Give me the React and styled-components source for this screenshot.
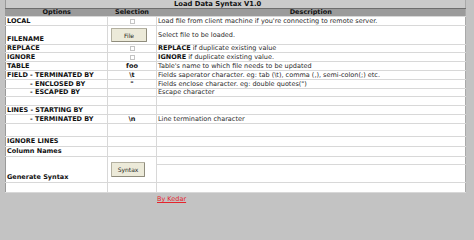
import React from 'react';
import styled, { createGlobalStyle } from 'styled-components';

const GlobalStyle = createGlobalStyle`
  html, body {
    margin: 0;
    padding: 0;
    background: #c3c3c3;
    overflow: hidden;
  }
  body {
    font-family: "DejaVu Sans", Verdana, sans-serif;
  }
`

const Page = styled.div`
  width: 474px;
  height: 204px;
`

const Sheet = styled.table`
  width: 460px;
  margin-left: 5px;
  border-collapse: collapse;
  table-layout: fixed;
  background: #fff;
  border-left: 1px solid #9a9a9a;
  border-right: 1px solid #a9a9a9;
`

const TitleCell = styled.th`
  height: 8px;
  padding: 0 0 0 168px;
  background: #cbcbcb;
  border-bottom: 1px solid #6e6e6e;
  font-size: 6.8px;
  line-height: 8px;
  font-weight: bold;
  color: #111;
  text-align: left;
`

const HeadCell = styled.th`
  height: 7px;
  padding: 0;
  background: #9b9b9b;
  font-size: 6.5px;
  line-height: 7px;
  font-weight: bold;
  color: #111;
  text-align: center;
`

const Row = styled.tr`
  height: ${({ $h }) => $h || 9}px;
`

const Label = styled.td`
  padding: 0 0 0 ${({ $indent }) => ($indent ? 24 : 1)}px;
  border: 1px solid #d8d8d8;
  border-left: none;
  font-size: 6.5px;
  line-height: 7px;
  font-weight: bold;
  color: #111;
  vertical-align: ${({ $bottom }) => ($bottom ? 'bottom' : 'middle')};
  padding-bottom: ${({ $bottom }) => ($bottom ? 1 : 0)}px;
  white-space: nowrap;
`

const Pick = styled.td`
  padding: 0;
  border: 1px solid #d8d8d8;
  font-size: 6.5px;
  line-height: 7px;
  font-weight: bold;
  color: #111;
  text-align: center;
  vertical-align: middle;
`

const Desc = styled.td`
  padding: 0 0 0 1px;
  border: 1px solid #d8d8d8;
  border-right: none;
  font-size: 6.5px;
  line-height: 7px;
  color: #2a2a2a;
  white-space: nowrap;
  vertical-align: middle;

  b {
    color: #111;
  }
`

const Check = styled.input.attrs({ type: 'checkbox' })`
  appearance: none;
  display: block;
  width: 5px;
  height: 5px;
  margin: 0 auto;
  border: 1px solid #c4c4c4;
  background: #fff;
`

const Button = styled.button`
  display: block;
  margin: 0 0 0 3px;
  width: ${({ $w }) => $w}px;
  height: ${({ $hh }) => $hh}px;
  padding: 0;
  background: #ecead9;
  border: 1px solid #b3b0a0;
  border-bottom-color: #8f8c7c;
  border-right-color: #8f8c7c;
  border-radius: 1px;
  font-family: "DejaVu Sans", Verdana, sans-serif;
  font-size: 6px;
  color: #222;
`

const Footer = styled.div`
  padding: 2px 0 0 157px;
  font-size: 6.5px;
  line-height: 8px;
`

const Credit = styled.a`
  color: #e5242c;
  text-decoration: underline;
`

const rows = [
  { label: 'LOCAL', pick: <Check />, desc: "Load file from client machine if you're connecting to remote server." },
  { label: 'FILENAME', h: 19, bottom: true, pick: <Button $w={36} $hh={14}>File</Button>, desc: 'Select file to be loaded.' },
  { label: 'REPLACE', h: 8, pick: <Check />, desc: <><b>REPLACE</b> if duplicate existing value</> },
  { label: 'IGNORE', pick: <Check />, desc: <><b>IGNORE</b> if duplicate existing value.</> },
  { label: 'TABLE', pick: 'foo', desc: "Table's name to which file needs to be updated" },
  { label: 'FIELD - TERMINATED BY', pick: '\\t', desc: 'Fields saperator character. eg: tab (\\t), comma (,), semi-colon(;) etc.' },
  { label: '- ENCLOSED BY', indent: true, pick: '"', desc: 'Fields enclose character. eg: double quotes(")' },
  { label: '- ESCAPED BY', indent: true, h: 8, pick: '', desc: 'Escape character' },
  { label: '', pick: '', desc: '' },
  { label: 'LINES - STARTING BY', pick: '', desc: '' },
  { label: '- TERMINATED BY', indent: true, pick: '\\n', desc: 'Line termination character' },
  { label: '', h: 13, pick: '', desc: '' },
  { label: 'IGNORE LINES', h: 10, pick: '', desc: '' },
  { label: 'Column Names', h: 10, pick: '', desc: '' },
]

export default function App() {
  return (
    <>
      <GlobalStyle />
      <Page>
        <Sheet>
          <colgroup>
            <col style={{ width: 102 }} />
            <col style={{ width: 49 }} />
            <col style={{ width: 309 }} />
          </colgroup>
          <thead>
            <tr>
              <TitleCell colSpan={3}>Load Data Syntax V1.0</TitleCell>
            </tr>
            <tr>
              <HeadCell>Options</HeadCell>
              <HeadCell>Selection</HeadCell>
              <HeadCell>Description</HeadCell>
            </tr>
          </thead>
          <tbody>
            {rows.map((r, i) => (
              <Row key={i} $h={r.h}>
                <Label $indent={r.indent} $bottom={r.bottom}>{r.label}</Label>
                <Pick>{r.pick}</Pick>
                <Desc>{r.desc}</Desc>
              </Row>
            ))}
            <Row $h={8}>
              <Label rowSpan={2} $bottom>Generate Syntax</Label>
              <Pick rowSpan={2}>
                <Button $w={34} $hh={15}>Syntax</Button>
              </Pick>
              <Desc />
            </Row>
            <Row $h={18}>
              <Desc />
            </Row>
            <Row $h={10}>
              <Label />
              <Pick />
              <Desc />
            </Row>
          </tbody>
        </Sheet>
        <Footer>
          <Credit href="#">By Kedar</Credit>
        </Footer>
      </Page>
    </>
  )
}
